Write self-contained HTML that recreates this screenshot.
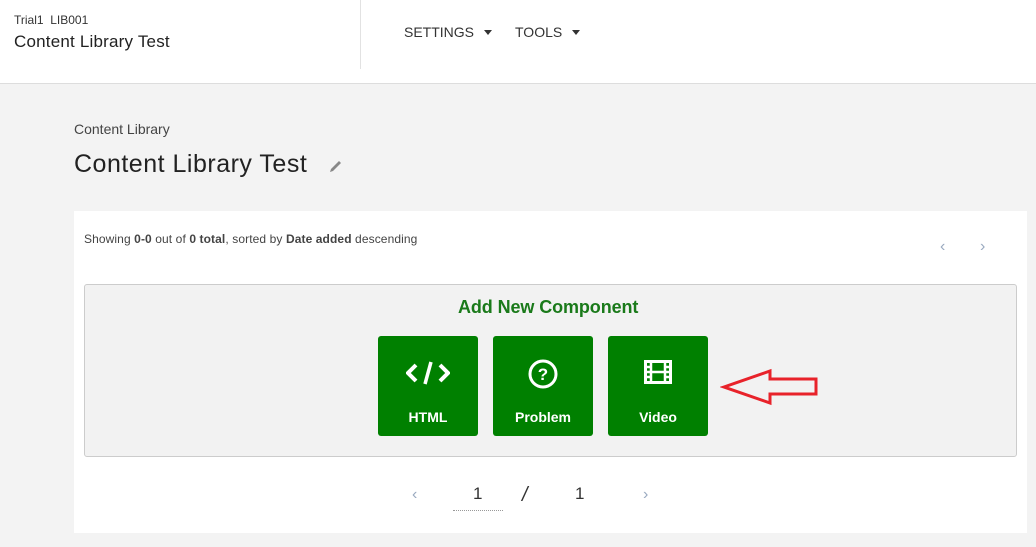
<!DOCTYPE html>
<html><head><style>
*{margin:0;padding:0;box-sizing:border-box}
body{width:1036px;height:547px;background:#f3f3f3;font-family:"Liberation Sans",sans-serif;position:relative;overflow:hidden;color:#333}
.hdr{position:absolute;left:0;top:0;width:1036px;height:84px;background:#fff;border-bottom:1px solid #ddd}
.div{position:absolute;left:360px;top:0;width:1px;height:69px;background:#e2e2e2}
.t{position:absolute;white-space:nowrap}
.tri{display:inline-block;width:0;height:0;border-left:4px solid transparent;border-right:4px solid transparent;border-top:5px solid #333;margin-left:10px;vertical-align:2px}
.panel{position:absolute;left:74px;top:211px;width:953px;height:322px;background:#fff}
.box{position:absolute;left:84px;top:284px;width:933px;height:173px;background:#f2f2f2;border:1px solid #ccc;border-radius:3px}
.btn{position:absolute;top:336px;width:100px;height:100px;background:#008000;border-radius:3px;color:#fff;font-weight:bold;font-size:14px;text-align:center}
.btn span{position:absolute;left:0;right:0;top:73px}
.btn svg{position:absolute;left:50%;top:24px;transform:translateX(-50%)}
.chev{color:#9aaac0;font-size:16px}
</style></head><body>
<div class="hdr"></div>
<div class="div"></div>
<div class="t" style="left:14px;top:13px;font-size:12px;color:#333">Trial1&nbsp; LIB001</div>
<div class="t" style="left:14px;top:32px;font-size:17px;color:#222;letter-spacing:0.2px">Content Library Test</div>
<div class="t" style="left:404px;top:24px;font-size:14px;color:#333">SETTINGS<span class="tri"></span></div>
<div class="t" style="left:515px;top:24px;font-size:14px;color:#333">TOOLS<span class="tri"></span></div>
<div class="t" style="left:74px;top:121px;font-size:14px;color:#444">Content Library</div>
<div class="t" style="left:74px;top:150px;font-size:25px;color:#222;letter-spacing:0.5px">Content Library Test</div>
<svg class="t" style="left:328px;top:159px" width="15" height="15" viewBox="0 0 15 15"><path d="M2 13 L3 10 L11 2 L13 4 L5 12 Z" fill="#888"/></svg>
<div class="panel"></div>
<div class="t" style="left:84px;top:232px;font-size:12px;color:#444;letter-spacing:0.1px">Showing <b>0-0</b> out of <b>0 total</b>, sorted by <b>Date added</b> descending</div>
<div class="t chev" style="left:940px;top:238px">‹</div>
<div class="t chev" style="left:980px;top:238px">›</div>
<div class="box"></div>
<div class="t" style="left:458px;top:297px;font-size:18px;color:#1a7a1a;font-weight:bold;letter-spacing:-0.1px">Add New Component</div>
<div class="btn" style="left:378px"><svg width="44" height="26" viewBox="0 0 44 26"><path d="M10 5 L2 13 L10 21 M34 5 L42 13 L34 21" stroke="#fff" stroke-width="4" fill="none"/><path d="M25 2 L19 24" stroke="#fff" stroke-width="3.5"/></svg><span>HTML</span></div>
<div class="btn" style="left:493px"><svg width="32" height="32" viewBox="0 0 32 32" style="top:22px"><circle cx="16" cy="16" r="13" stroke="#fff" stroke-width="3" fill="none"/><text x="16" y="22" font-size="17" font-weight="bold" fill="#fff" text-anchor="middle" font-family="Liberation Sans">?</text></svg><span>Problem</span></div>
<div class="btn" style="left:608px"><svg width="28" height="24" viewBox="0 0 28 24"><rect x="1.5" y="1.5" width="25" height="21" stroke="#fff" stroke-width="3" fill="none"/><path d="M7 1 V23 M21 1 V23 M7 12 H21 M1 7 H7 M1 12 H7 M1 17 H7 M21 7 H27 M21 12 H27 M21 17 H27" stroke="#fff" stroke-width="2.5"/></svg><span>Video</span></div>
<svg class="t" style="left:720px;top:368px" width="100" height="38" viewBox="0 0 100 38"><path d="M4 19 L50 3 L50 11 L96 11 L96 26 L50 26 L50 35 Z" stroke="#e8222a" stroke-width="3" fill="none"/></svg>
<div class="t chev" style="left:412px;top:486px">‹</div>
<div class="t" style="left:473px;top:484px;font-size:17px;color:#333">1</div>
<div class="t" style="left:453px;top:510px;width:50px;border-top:1px dotted #999"></div>
<div class="t" style="left:522px;top:484px;font-size:20px;color:#333;font-style:italic">/</div>
<div class="t" style="left:575px;top:484px;font-size:17px;color:#333">1</div>
<div class="t chev" style="left:643px;top:486px">›</div>
</body></html>
